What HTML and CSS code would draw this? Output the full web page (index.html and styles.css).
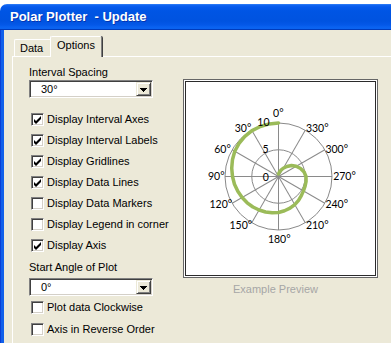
FILE: index.html
```html
<!DOCTYPE html>
<html>
<head>
<meta charset="utf-8">
<title>Polar Plotter - Update</title>
<link rel="stylesheet" href="styles.css">
</head>
<body>
<div class="window">
  <div class="titlebar"><span class="title">Polar Plotter  - Update</span></div>
  <div class="frame">
    <div class="client">
      <div class="tabs">
        <div class="tab">Data</div>
        <div class="tab active">Options</div>
      </div>
      <div class="panel">
        <div class="left">
          <div class="label">Interval Spacing</div>
          <div class="combo">
            <span class="combo-text">30°</span>
            <span class="combo-btn"><svg width="7" height="4" viewBox="0 0 7 4"><path d="M0 0h7v1h-1v1h-1v1h-1v1h-1v-1h-1v-1h-1v-1h-1z" fill="#000"/></svg></span>
          </div>
          <div class="checks">
            <div class="row"><span class="cb"><svg class="tick" viewBox="1 1 11 11"><polygon points="3,6 5,8 10,3 10,6 5,11 3,9"/></svg></span><span>Display Interval Axes</span></div>
            <div class="row"><span class="cb"><svg class="tick" viewBox="1 1 11 11"><polygon points="3,6 5,8 10,3 10,6 5,11 3,9"/></svg></span><span>Display Interval Labels</span></div>
            <div class="row"><span class="cb"><svg class="tick" viewBox="1 1 11 11"><polygon points="3,6 5,8 10,3 10,6 5,11 3,9"/></svg></span><span>Display Gridlines</span></div>
            <div class="row"><span class="cb"><svg class="tick" viewBox="1 1 11 11"><polygon points="3,6 5,8 10,3 10,6 5,11 3,9"/></svg></span><span>Display Data Lines</span></div>
            <div class="row"><span class="cb"></span><span>Display Data Markers</span></div>
            <div class="row"><span class="cb"></span><span>Display Legend in corner</span></div>
            <div class="row"><span class="cb"><svg class="tick" viewBox="1 1 11 11"><polygon points="3,6 5,8 10,3 10,6 5,11 3,9"/></svg></span><span>Display Axis</span></div>
          </div>
          <div class="label label2">Start Angle of Plot</div>
          <div class="combo combo2">
            <span class="combo-text">0°</span>
            <span class="combo-btn"><svg width="7" height="4" viewBox="0 0 7 4"><path d="M0 0h7v1h-1v1h-1v1h-1v1h-1v-1h-1v-1h-1v-1h-1z" fill="#000"/></svg></span>
          </div>
          <div class="checks2">
            <div class="row row2"><span class="cb"></span><span>Plot data Clockwise</span></div>
            <div class="row row2"><span class="cb"></span><span>Axis in Reverse Order</span></div>
          </div>
        </div>
        <div class="right">
          <div class="plotbox">
            <div class="plotinner">
              <svg class="plot" width="189" height="193" viewBox="186 82 189 193">
                <g transform="translate(278.5 176.5)" fill="none" stroke="#8a8a8a" stroke-width="1">
                  <circle r="26.75"/>
                  <circle r="53.5"/>
                  <line x1="0" y1="-53.5" x2="0" y2="53.5"/>
                  <line x1="0" y1="-53.5" x2="0" y2="53.5" transform="rotate(30)"/>
                  <line x1="0" y1="-53.5" x2="0" y2="53.5" transform="rotate(60)"/>
                  <line x1="-53.5" y1="0" x2="53.5" y2="0"/>
                  <line x1="0" y1="-53.5" x2="0" y2="53.5" transform="rotate(120)"/>
                  <line x1="0" y1="-53.5" x2="0" y2="53.5" transform="rotate(150)"/>
                </g>
                <polyline transform="translate(278.5 176.5)" fill="none" stroke="#9bbb59" stroke-width="3.5" stroke-linejoin="round" stroke-linecap="round"
                  points="0,-53.5 -9.27,-52.59 -18.19,-49.99 -26.5,-45.9 -33.62,-40.06 -39.45,-33.1 -43.73,-25.25 -46.05,-16.76 -46.78,-8.25 -46,0 -44.02,7.76 -40.69,14.81 -36.37,21 -31.33,26.29 -25.58,30.49 -19.35,33.51 -12.93,35.52 -6.41,36.34 0,36 6.04,34.27 11.53,31.67 16.25,28.15 20.06,23.9 22.83,19.16 24.94,14.4 26.59,9.68 27.57,4.86 27.5,0 25.6,-4.51 22.08,-8.04 17.75,-10.25 13.02,-10.93 8.36,-9.96 4.75,-8.23 2.22,-6.11 0.69,-3.94 0,-2.5"/>
                <g class="axlab" text-anchor="middle">
                  <text x="278.3" y="117">0°</text>
                  <text x="243" y="131.5">30°</text>
                  <text x="222.5" y="152.5">60°</text>
                  <text x="216.3" y="180">90°</text>
                  <text x="220.8" y="208.3">120°</text>
                  <text x="240.8" y="229.3">150°</text>
                  <text x="279.2" y="243.3">180°</text>
                  <text x="317.2" y="229.3">210°</text>
                  <text x="336.7" y="208.3">240°</text>
                  <text x="344.5" y="180">270°</text>
                  <text x="336.7" y="152.7">300°</text>
                  <text x="317.2" y="131.7">330°</text>
                </g>
                <g class="axlab" text-anchor="end">
                  <text x="269.5" y="126">10</text>
                  <text x="268.5" y="153.3">5</text>
                  <text x="268.8" y="180.7">0</text>
                </g>
              </svg>
            </div>
          </div>
          <div class="caption">Example Preview</div>
        </div>
      </div>
    </div>
  </div>
</div>
</body>
</html>
```
FILE: styles.css
```css
html, body {
  margin: 0;
  padding: 0;
}
body {
  background: #ffffff;
  width: 391px;
  height: 343px;
  overflow: hidden;
  font-family: "Liberation Sans", Arial, sans-serif;
  font-size: 11px;
  color: #000;
}
.window {
  margin-top: 4px;
  height: 339px;
  display: flex;
  flex-direction: column;
  overflow: hidden;
}
.titlebar {
  flex: none;
  height: 26px;
  box-sizing: border-box;
  padding-left: 10px;
  display: flex;
  align-items: center;
  border-top-left-radius: 7px;
  background: linear-gradient(to bottom,
    #3d86f6 0px, #1266f2 1px, #0659ec 3px, #0055e4 7px,
    #0053e0 17px, #0458e8 21px, #0a62f0 23px, #0b64f0 25px,
    #003cbc 25px, #003cbc 26px);
}
.title {
  color: #fff;
  font-weight: bold;
  font-size: 13px;
  line-height: 16px;
  white-space: pre;
  text-shadow: 1px 1px 0 rgba(10, 24, 131, 0.55);
}
.frame {
  flex: 1;
  display: flex;
  min-height: 0;
  padding-left: 4px;
  background: linear-gradient(to right, #0a3fd6 0px, #0a3fd6 1px, #1160ea 1px, #1160ea 4px);
}
.client {
  flex: 1;
  min-width: 0;
  background: #ece9d8;
  padding: 6px 0 0 8px;
  display: flex;
  flex-direction: column;
  overflow: hidden;
}
.tabs {
  flex: none;
  display: flex;
  align-items: flex-end;
  height: 21px;
  padding-left: 2px;
  margin-bottom: -1px;
  position: relative;
  z-index: 1;
}
.tab {
  box-sizing: border-box;
  width: 38px;
  height: 17px;
  margin-bottom: 1px;
  padding: 2px 0 0 5px;
  line-height: 13px;
  background: #ece9d8;
  border-top: 1px solid #fff;
  border-left: 1px solid #fff;
  border-right: 1px solid #808080;
  border-radius: 2px 2px 0 0;
}
.tab.active {
  width: 52px;
  height: 21px;
  margin: 0 0 0 -2px;
  padding: 2px 0 0 0;
  text-align: center;
  box-shadow: 1px 0 0 #404040;
}
.panel {
  flex: 1;
  width: 420px;
  box-sizing: border-box;
  border-top: 1px solid #fff;
  border-left: 1px solid #fff;
  padding: 9px 0 0 16px;
  display: flex;
  align-items: flex-start;
}
.left {
  flex: none;
  width: 154px;
  display: flex;
  flex-direction: column;
}
.label {
  height: 13px;
  line-height: 13px;
  white-space: nowrap;
}
.label2 {
  margin-top: 5px;
}
.combo {
  margin-top: 1px;
  width: 124px;
  height: 18px;
  box-sizing: border-box;
  padding: 1px;
  border: 1px solid;
  border-color: #808080 #fff #fff #808080;
  box-shadow: inset 1px 1px 0 #404040, inset -1px -1px 0 #d4d0c8;
  background: #fff;
  display: flex;
}
.combo2 {
  margin-top: 4px;
}
.combo-text {
  flex: 1;
  padding-left: 10px;
  line-height: 14px;
}
.combo-btn {
  flex: none;
  width: 15px;
  height: 14px;
  box-sizing: border-box;
  border: 1px solid;
  border-color: #ece9d8 #404040 #404040 #ece9d8;
  box-shadow: inset 1px 1px 0 #fff, inset -1px -1px 0 #808080;
  background: #ece9d8;
  display: flex;
  align-items: center;
  justify-content: center;
}
.combo-btn svg {
  display: block;
  margin-top: 1px;
}
.checks {
  margin-top: 11px;
  display: flex;
  flex-direction: column;
}
.checks2 {
  display: flex;
  flex-direction: column;
}
.row {
  height: 21px;
  padding-left: 2px;
  display: flex;
  align-items: center;
  gap: 3px;
  line-height: 13px;
  white-space: nowrap;
}
.row2 {
  height: 22px;
}
.cb {
  flex: none;
  width: 13px;
  height: 13px;
  box-sizing: border-box;
  border: 1px solid;
  border-color: #808080 #fff #fff #808080;
  box-shadow: inset 1px 1px 0 #404040, inset -1px -1px 0 #d4d0c8;
  background: #fff;
}
.tick {
  display: block;
  width: 11px;
  height: 11px;
  fill: #000;
}
.right {
  flex: none;
  margin-top: 13px;
  display: flex;
  flex-direction: column;
}
.plotbox {
  width: 195px;
  height: 199px;
  box-sizing: border-box;
  border: 1px solid #666;
  padding: 1px;
  background: #fff;
}
.plotinner {
  width: 189px;
  height: 193px;
  border: 1px solid #2b2b2b;
}
.plot {
  display: block;
}
.axlab {
  font-family: Lato, "Liberation Sans", sans-serif;
  font-size: 10.5px;
  fill: #000;
}
.caption {
  margin-top: 5px;
  line-height: 13px;
  color: #a6a6a6;
  text-align: center;
  padding-right: 10px;
}
```
